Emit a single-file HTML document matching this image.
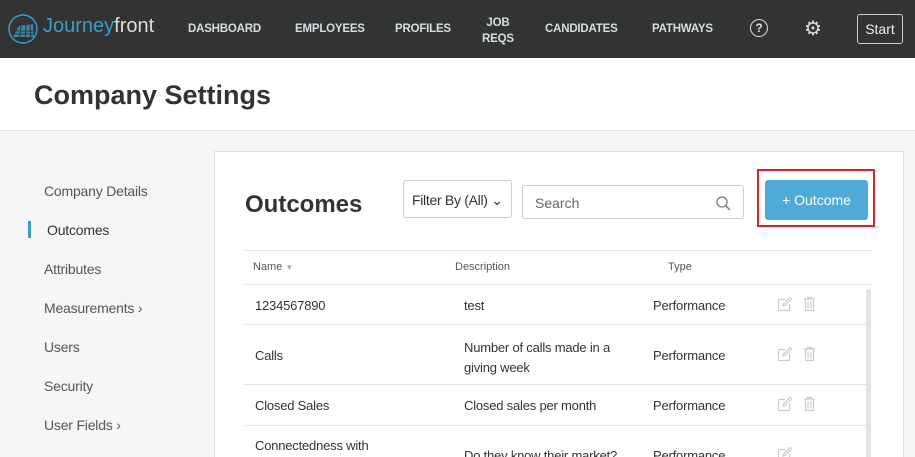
<!DOCTYPE html><html><head><style>
html,body{margin:0;width:915px;height:457px;overflow:hidden}
body{font-family:"Liberation Sans",sans-serif;background:#f5f6f8;position:relative}
.a{position:absolute}
.hdr{left:0;top:0;width:915px;height:58px;background:#323333}
.nav{color:#d7dde3;font-weight:bold;font-size:11.5px;top:23px;letter-spacing:-.2px}
.side{font-size:14px;color:#555;letter-spacing:-.2px}
.t{font-size:13px;color:#333;letter-spacing:-.2px}
</style></head><body>
<div class="a hdr"></div>
<svg class="a" style="left:7px;top:13px" width="32" height="32"><circle cx="16" cy="16" r="14" fill="none" stroke="#3d9cc9" stroke-width="1.5"/><path d="M6 24 L12 13 L26 11 L27 24 Z" fill="#3d9cc9" opacity=".8"/><path d="M9 18H27M8 21H27M14 13L12 28M19 12L18 29M23 11L24 27" stroke="#323333" stroke-width="1"/></svg>
<div class="a" style="left:43px;top:15px;font-size:20px;color:#3d9cc9">Journey<span style="color:#ddd">front</span></div>
<div class="a nav" style="left:188px">DASHBOARD</div>
<div class="a nav" style="left:295px">EMPLOYEES</div>
<div class="a nav" style="left:395px">PROFILES</div>
<div class="a nav" style="left:482px;top:15px;line-height:16px;text-align:center">JOB<br>REQS</div>
<div class="a nav" style="left:545px">CANDIDATES</div>
<div class="a nav" style="left:652px">PATHWAYS</div>
<div class="a" style="left:750px;top:19px;width:16px;height:16px;border:1.5px solid #ddd;border-radius:50%;color:#ddd;font-size:12px;text-align:center;line-height:16px;font-weight:bold">?</div>
<div class="a" style="left:804px;top:16px;color:#ddd;font-size:20px">⚙</div>
<div class="a" style="left:857px;top:14px;width:46px;height:28px;border:1px solid #ccc;border-radius:3px;color:#eee;font-size:14px;text-align:center;line-height:28px;box-sizing:border-box;height:30px">Start</div>
<div class="a" style="left:0;top:58px;width:915px;height:72px;background:#fff;border-bottom:1px solid #e2e2e2"></div>
<div class="a" style="left:34px;top:80px;font-size:27px;font-weight:bold;color:#333">Company Settings</div>
<div class="a side" style="left:44px;top:183px">Company Details</div>
<div class="a" style="left:28px;top:221px;width:3px;height:17px;background:#3d9cc9"></div>
<div class="a side" style="left:47px;top:222px;color:#333">Outcomes</div>
<div class="a side" style="left:44px;top:261px">Attributes</div>
<div class="a side" style="left:44px;top:300px">Measurements ›</div>
<div class="a side" style="left:44px;top:339px">Users</div>
<div class="a side" style="left:44px;top:378px">Security</div>
<div class="a side" style="left:44px;top:417px">User Fields ›</div>
<div class="a" style="left:214px;top:151px;width:688px;height:320px;background:#fff;border:1px solid #e0e0e0"></div>
<div class="a" style="left:245px;top:191px;font-size:24px;font-weight:bold;color:#333">Outcomes</div>
<div class="a" style="left:403px;top:180px;width:109px;height:38px;border:1px solid #ccc;border-radius:3px;font-size:14px;color:#333;line-height:38px;padding-left:8px;box-sizing:border-box;letter-spacing:-.3px">Filter By (All) ⌄</div>
<div class="a" style="left:522px;top:185px;width:222px;height:34px;border:1px solid #ccc;border-radius:3px;box-sizing:border-box;font-size:14px;color:#666;line-height:34px;padding-left:12px">Search</div>
<svg class="a" style="left:715px;top:195px" width="16" height="16"><circle cx="7" cy="7" r="5" fill="none" stroke="#777" stroke-width="1.3"/><path d="M11 11L15 15" stroke="#777" stroke-width="1.3"/></svg>
<div class="a" style="left:757px;top:169px;width:118px;height:58px;border:2px solid #e31e24;box-sizing:border-box"></div>
<div class="a" style="left:765px;top:180px;width:103px;height:40px;background:#4eaad6;border-radius:3px;color:#fff;font-size:14px;text-align:center;line-height:40px">+ Outcome</div>
<div class="a" style="left:245px;top:250px;width:627px;border-top:1px solid #e3e3e3"></div>
<div class="a" style="left:253px;top:261px;font-size:11px;color:#555">Name <span style="color:#aaa;font-size:8px">▼</span></div>
<div class="a" style="left:455px;top:261px;font-size:11px;color:#555">Description</div>
<div class="a" style="left:668px;top:261px;font-size:11px;color:#555">Type</div>
<div class="a" style="left:245px;top:284px;width:627px;border-top:1px solid #e3e3e3"></div>
<div class="a" style="left:866px;top:289px;width:5px;height:170px;background:#e3e3e3;border-radius:3px"></div>
<svg width="0" height="0" style="position:absolute"><defs><g id="ed"><path d="M1.5 3.5H8M1.5 3.5V14.5H12.5V8" fill="none" stroke="#ccc" stroke-width="1.2"/><path d="M6 10L6.5 8L13 1.5L14.5 3L8 9.5Z" fill="none" stroke="#ccc" stroke-width="1.2"/></g><g id="tr"><path d="M1 3H12M4.5 3V1.5H8.5V3M2.5 3.5V14.5H10.5V3.5M5 5.5V12.5M8 5.5V12.5" fill="none" stroke="#ccc" stroke-width="1.2"/></g></defs></svg>
<div class="a t" style="left:255px;top:298px">1234567890</div><div class="a t" style="left:464px;top:298px">test</div><div class="a t" style="left:653px;top:298px">Performance</div>
<svg class="a" style="left:777px;top:296px" width="40" height="16"><use href="#ed"/><use href="#tr" x="26"/></svg>
<div class="a" style="left:245px;top:324px;width:621px;border-top:1px solid #e3e3e3"></div>
<div class="a t" style="left:255px;top:348px">Calls</div><div class="a t" style="left:464px;top:338px;line-height:20px">Number of calls made in a<br>giving week</div><div class="a t" style="left:653px;top:348px">Performance</div>
<svg class="a" style="left:777px;top:346px" width="40" height="16"><use href="#ed"/><use href="#tr" x="26"/></svg>
<div class="a" style="left:245px;top:384px;width:621px;border-top:1px solid #e3e3e3"></div>
<div class="a t" style="left:255px;top:398px">Closed Sales</div><div class="a t" style="left:464px;top:398px">Closed sales per month</div><div class="a t" style="left:653px;top:398px">Performance</div>
<svg class="a" style="left:777px;top:396px" width="40" height="16"><use href="#ed"/><use href="#tr" x="26"/></svg>
<div class="a" style="left:245px;top:425px;width:621px;border-top:1px solid #e3e3e3"></div>
<div class="a t" style="left:255px;top:438px">Connectedness with</div><div class="a t" style="left:464px;top:448px">Do they know their market?</div><div class="a t" style="left:653px;top:448px">Performance</div>
<svg class="a" style="left:777px;top:446px" width="20" height="16"><use href="#ed"/></svg>
</body></html>
